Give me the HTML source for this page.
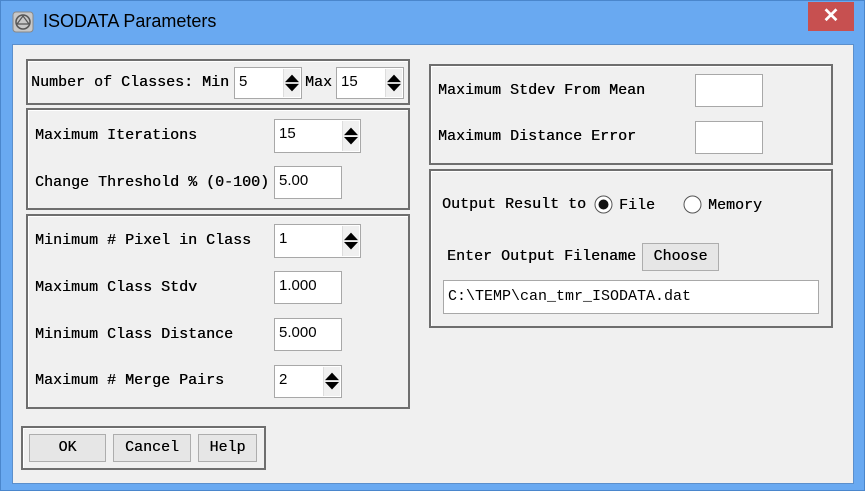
<!DOCTYPE html>
<html><head><style>
body{margin:0;width:865px;height:491px;overflow:hidden;background:#fff;font-family:"Liberation Mono",monospace;}
.win{position:absolute;left:0;top:0;width:863px;height:489px;background:#69a9f1;border:1px solid #4a86cc;}
.content{position:absolute;left:12px;top:44px;width:840px;height:438px;background:#f0f0f0;border:1px solid #5b8fcc;}
.a{position:absolute;}
.p{position:absolute;border:2px solid #6e6e6e;box-shadow:inset 1px 1px 0 #fff;}
.l{position:absolute;font-size:15px;color:#000;white-space:pre;line-height:16px;text-shadow:0.3px 0 0 #000;}
.in{position:absolute;background:#fff;border:1px solid #a8a8a8;box-sizing:border-box;font-family:"Liberation Sans",sans-serif;font-size:15px;padding:5px 0 0 4px;line-height:17px;}
.sp{position:absolute;right:1px;top:1px;width:16px;height:calc(100% - 2px);background:#f0f0f0;border-left:1px solid #ddd;}
.btn{position:absolute;background:#e6e6e6;border:1px solid #adadad;box-sizing:border-box;font-size:15px;text-align:center;line-height:26px;text-shadow:0.3px 0 0 #000;}
</style></head><body>
<div class="win"></div>
<svg class="a" style="left:12px;top:11px" width="22" height="22" viewBox="0 0 22 22"><rect x="1" y="1" width="20" height="20" rx="3" fill="#c8c8c8" stroke="#888"/><circle cx="11" cy="11" r="7" fill="none" stroke="#555" stroke-width="1.5"/><path d="M5 13 L11 5 L17 13 Z" fill="none" stroke="#555" stroke-width="1.2"/></svg>
<div class="a" style="left:43px;top:11px;font-family:'Liberation Sans',sans-serif;font-size:18px;color:#000">ISODATA Parameters</div>
<div class="a" style="left:808px;top:2px;width:46px;height:29px;background:#c75050;color:#fff;font-family:'Liberation Sans',sans-serif;font-size:20px;text-align:center;line-height:29px;font-weight:bold">✕</div>
<div class="content"></div>

<div class="p" style="left:26px;top:59px;width:380px;height:42px"></div>
<div class="l" style="left:31px;top:75px">Number of Classes: Min</div>
<div class="in" style="left:234px;top:67px;width:68px;height:32px">5<svg class="sp" viewBox="0 0 16 30" preserveAspectRatio="none"><path d="M1 14 L8 6 L15 14Z M1 16 L8 24 L15 16Z" fill="#000"/></svg></div>
<div class="l" style="left:305px;top:75px">Max</div>
<div class="in" style="left:336px;top:67px;width:68px;height:32px">15<svg class="sp" viewBox="0 0 16 30" preserveAspectRatio="none"><path d="M1 14 L8 6 L15 14Z M1 16 L8 24 L15 16Z" fill="#000"/></svg></div>

<div class="p" style="left:26px;top:108px;width:380px;height:98px"></div>
<div class="l" style="left:35px;top:128px">Maximum Iterations</div>
<div class="in" style="left:274px;top:119px;width:87px;height:34px">15<svg class="sp" viewBox="0 0 16 32" preserveAspectRatio="none"><path d="M1 15 L8 7 L15 15Z M1 17 L8 25 L15 17Z" fill="#000"/></svg></div>
<div class="l" style="left:35px;top:175px">Change Threshold % (0-100)</div>
<div class="in" style="left:274px;top:166px;width:68px;height:33px">5.00</div>

<div class="p" style="left:26px;top:214px;width:380px;height:191px"></div>
<div class="l" style="left:35px;top:233px">Minimum # Pixel in Class</div>
<div class="in" style="left:274px;top:224px;width:87px;height:34px">1<svg class="sp" viewBox="0 0 16 32" preserveAspectRatio="none"><path d="M1 15 L8 7 L15 15Z M1 17 L8 25 L15 17Z" fill="#000"/></svg></div>
<div class="l" style="left:35px;top:280px">Maximum Class Stdv</div>
<div class="in" style="left:274px;top:271px;width:68px;height:33px">1.000</div>
<div class="l" style="left:35px;top:327px">Minimum Class Distance</div>
<div class="in" style="left:274px;top:318px;width:68px;height:33px">5.000</div>
<div class="l" style="left:35px;top:373px">Maximum # Merge Pairs</div>
<div class="in" style="left:274px;top:365px;width:68px;height:33px">2<svg class="sp" viewBox="0 0 16 31" preserveAspectRatio="none"><path d="M1 14 L8 6 L15 14Z M1 16 L8 24 L15 16Z" fill="#000"/></svg></div>

<div class="p" style="left:429px;top:64px;width:400px;height:97px"></div>
<div class="l" style="left:438px;top:83px">Maximum Stdev From Mean</div>
<div class="in" style="left:695px;top:74px;width:68px;height:33px"></div>
<div class="l" style="left:438px;top:129px">Maximum Distance Error</div>
<div class="in" style="left:695px;top:121px;width:68px;height:33px"></div>

<div class="p" style="left:429px;top:169px;width:400px;height:155px"></div>
<div class="l" style="left:442px;top:197px">Output Result to</div>
<svg class="a" style="left:594px;top:195px" width="19" height="19"><circle cx="9.5" cy="9.5" r="8.5" fill="#fff" stroke="#555"/><circle cx="9.5" cy="9.5" r="5" fill="#111"/></svg>
<div class="l" style="left:619px;top:198px">File</div>
<svg class="a" style="left:683px;top:195px" width="19" height="19"><circle cx="9.5" cy="9.5" r="8.5" fill="#fff" stroke="#555"/></svg>
<div class="l" style="left:708px;top:198px">Memory</div>
<div class="l" style="left:447px;top:249px">Enter Output Filename</div>
<div class="btn" style="left:642px;top:243px;width:77px;height:28px">Choose</div>
<div class="in" style="left:443px;top:280px;width:376px;height:34px;font-family:'Liberation Mono',monospace;padding-top:7px">C:\TEMP\can_tmr_ISODATA.dat</div>

<div class="p" style="left:21px;top:426px;width:241px;height:40px"></div>
<div class="btn" style="left:29px;top:434px;width:77px;height:28px">OK</div>
<div class="btn" style="left:113px;top:434px;width:78px;height:28px">Cancel</div>
<div class="btn" style="left:198px;top:434px;width:59px;height:28px">Help</div>
</body></html>
